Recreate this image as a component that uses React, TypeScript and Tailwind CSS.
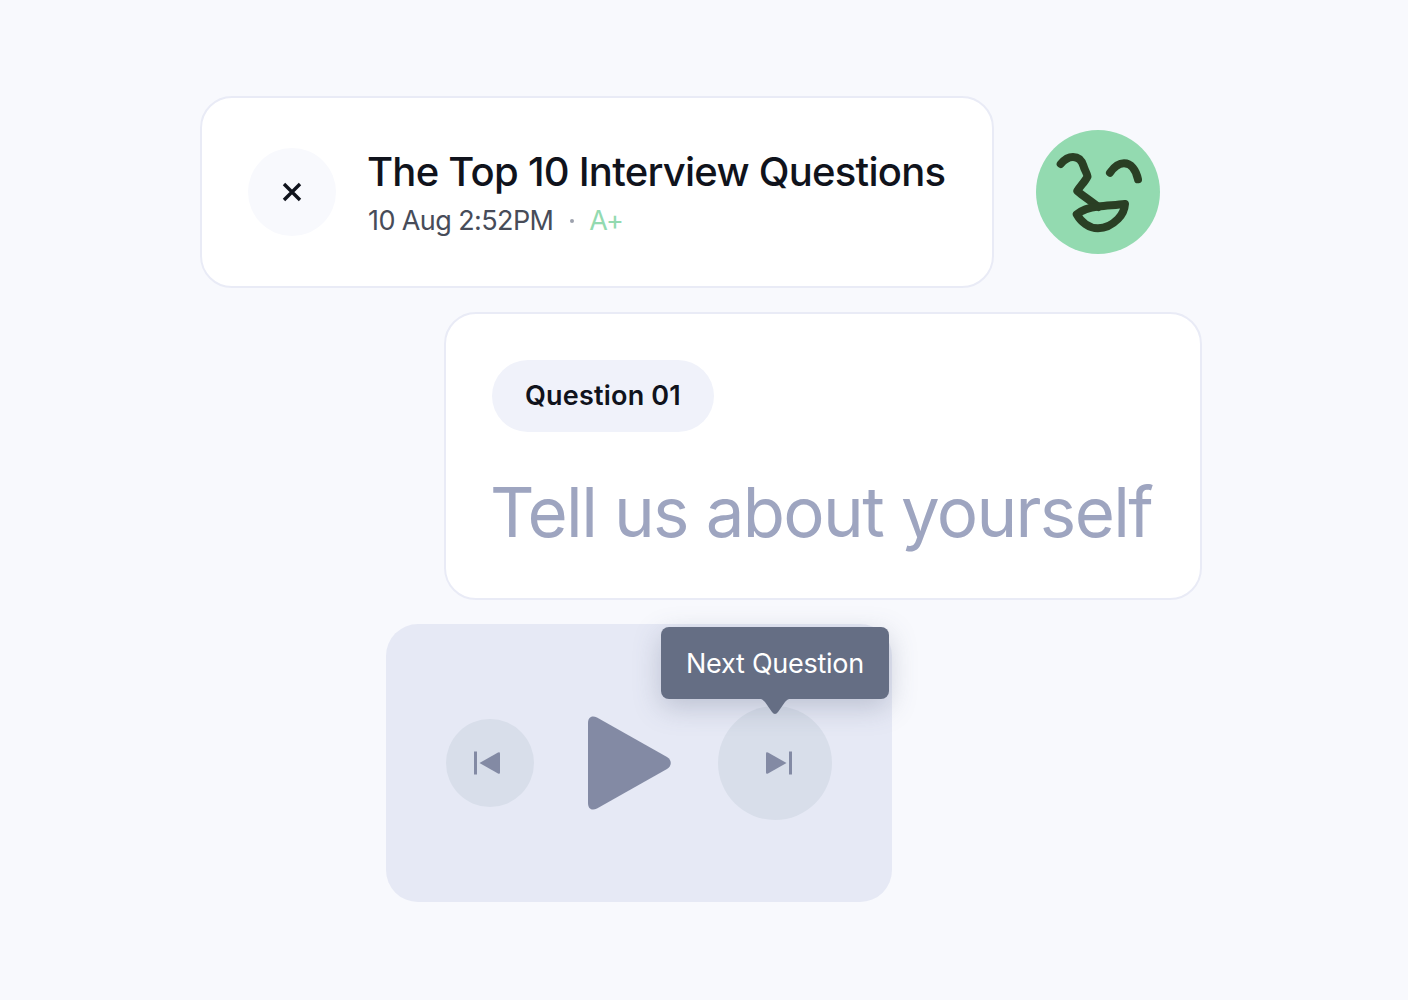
const font = { fontFamily: 'Inter, sans-serif' }

function Face() {
  return (
    <svg viewBox="0 0 124 124" className="w-[124px] h-[124px] shrink-0 ml-[42px] mt-[34px]">
      <circle cx="62" cy="62" r="62" fill="#93dab0" />
      <g fill="none" stroke="#2a3f24" strokeWidth="8" strokeLinecap="round" strokeLinejoin="round">
        <path d="M24.700 34C28 30 33 27 37 27C43 27 46 31 47.500 36C48.500 40 51 43 51.500 46.500C49 52 44 56 41.300 61C47 66 55 71 62.300 77" />
        <path d="M40.700 84.300C46 80 54 77.500 62 76.500C71 75.500 80 75 89 74C88.500 81 86 85 82 89C76 95 69 98.300 62 98.300C53 98.300 45 92 40.700 84.300Z" />
        <path d="M74 42.700C78 37 83 33.300 88 33.300C95 33.300 100 40 102 49.300" />
      </g>
    </svg>
  )
}

export default function App() {
  return (
    <div className="min-h-[1000px] bg-[#f8f9fd] pt-[96px] overflow-hidden" style={font}>
      <div className="flex items-start pl-[200px]">
        <div className="w-[794px] h-[192px] bg-white border-2 border-[#e9ebf6] rounded-[32px] flex items-center pl-[46px]">
          <div className="w-[88px] h-[88px] rounded-full bg-[#f8f9fd] flex items-center justify-center shrink-0">
            <svg viewBox="0 0 20 20" className="w-5 h-5">
              <path d="M2 2L18 18M18 2L2 18" stroke="#10131c" strokeWidth="3.4" />
            </svg>
          </div>
          <div className="ml-[32px] mt-[2px]">
            <div className="text-[40px] leading-[48px] font-medium text-[#10131c] tracking-[-0.75px] -ml-[1px] whitespace-nowrap">The Top 10 Interview Questions</div>
            <div className="flex items-center text-[27px] leading-[34px] mt-[8px] text-[#474c59] tracking-[-0.6px] whitespace-nowrap">
              <span>10 Aug 2:52PM</span>
              <span className="w-[4px] h-[4px] rounded-full bg-[#9ca1ad] ml-[17px]" />
              <span className="ml-[15px] tracking-[-1px] text-[#93dab0]">A+</span>
            </div>
          </div>
        </div>
        <Face />
      </div>

      <div className="ml-[444px] mt-[24px] w-[758px] h-[288px] bg-white border-2 border-[#e9ebf6] rounded-[32px] pl-[46px] pt-[46px]">
        <div className="inline-flex items-center justify-center w-[222px] h-[72px] pt-[1px] rounded-full bg-[#f0f2fa] text-[27px] tracking-[0.2px] font-semibold text-[#10131c]">Question 01</div>
        <div className="mt-[38px] -ml-[2px] text-[69px] leading-[84px] tracking-[-1.65px] text-[#9ea5c0] whitespace-nowrap">Tell us about yourself</div>
      </div>

      <div className="relative ml-[386px] mt-[24px] w-[506px] h-[278px] rounded-[32px] bg-[#e6e9f5] flex items-center pl-[60px]">
        <div className="w-[88px] h-[88px] rounded-full bg-[#d8deea] flex items-center justify-center shrink-0">
          <svg viewBox="0 0 26 24" className="w-[26px] h-[24px] -ml-[6px]">
            <rect x="0" y="0.500" width="3" height="23" fill="#838aa4" />
            <path d="M5.500 12L24 1.500Q26 0.500 26 2.500V21.500Q26 23.500 24 22.500Z" fill="#838aa4" />
          </svg>
        </div>
        <svg viewBox="0 0 83 94" className="w-[83px] h-[94px] ml-[54px] shrink-0">
          <path d="M0 7C0 1 4 -1 9 1.500L79 41C84 44 84 50 79 53L9 92.500C4 95 0 93 0 87Z" fill="#838aa4" />
        </svg>
        <div className="w-[114px] h-[114px] rounded-full bg-[#d8deea] ml-[47px] flex items-center justify-center shrink-0">
          <svg viewBox="0 0 26 24" className="w-[26px] h-[24px] ml-[7px]">
            <path d="M20.500 12L2 1.500Q0 0.500 0 2.500V21.500Q0 23.500 2 22.500Z" fill="#838aa4" />
            <rect x="23" y="0.500" width="3" height="23" fill="#838aa4" />
          </svg>
        </div>
        <div className="absolute left-[275px] top-[3px] w-[228px] h-[72px] pt-[3px] rounded-[8px] bg-[#656e84] shadow-[0_8px_28px_rgba(80,88,120,0.28)] flex items-center justify-center text-[27px] tracking-[-0.25px] text-white whitespace-nowrap">
          Next Question
          <svg viewBox="0 0 40 17" className="absolute left-[94px] top-[71px] w-[40px] h-[17px]">
            <path d="M0 0H40C34 0 32 2 30 4L23 14Q20 18 17 14L10 4C8 2 6 0 0 0Z" fill="#656e84" />
          </svg>
        </div>
      </div>
    </div>
  )
}
